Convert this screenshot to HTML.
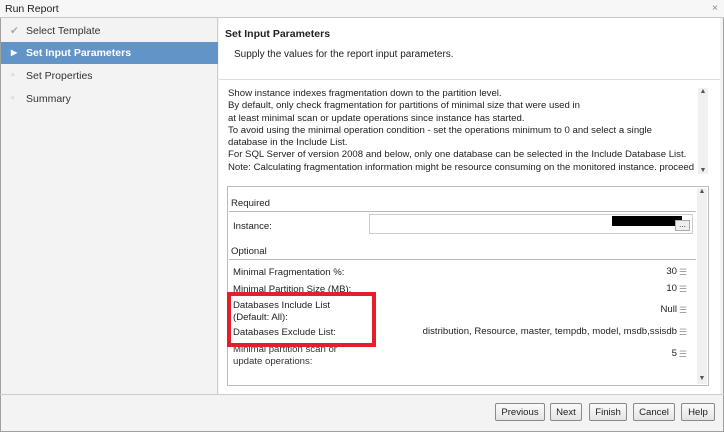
<!DOCTYPE html>
<html><head><style>
*{box-sizing:border-box;margin:0;padding:0}
body{width:724px;height:432px;background:#fff;font-family:"Liberation Sans",sans-serif;font-size:9.6px;color:#222;position:relative;overflow:hidden}
.abs{position:absolute}
.win{left:0;top:0;width:724px;height:432px;border:1px solid #a0a0a0;background:#f3f3f3}
.title{left:0;top:0;width:724px;height:18px;background:#f7f7f7;border-bottom:1px solid #c8c8c8;font-size:10.5px;padding:3px 5px}
.nav{left:1px;top:18px;width:217px;height:376px;background:#f3f3f3;border-right:1px solid #d0d0d0}
.item{position:absolute;left:0;width:217px;height:22px;font-size:10.5px;padding:5px 0 0 25px;color:#333}
.sel{background:#6394c8;color:#fff;font-weight:bold}
.right{left:219px;top:18px;width:501px;height:376px;background:#fff}
.rl{position:absolute;white-space:nowrap}
.btn{position:absolute;top:403px;height:18px;border:1px solid #8a8a8a;border-radius:2px;background:linear-gradient(#fafafa,#e4e4e4);font-size:9.6px;text-align:center;padding-top:3px;color:#222}
.ic{position:absolute;width:12px;height:10px;font-size:9px;color:#999;letter-spacing:-1px}
</style></head><body>
<div class="abs win"></div>
<div class="abs title">Run Report<span style="position:absolute;right:6px;top:2px;color:#888">×</span></div>
<div class="abs nav">
 <div class="item" style="top:2px"><span style="position:absolute;left:9px;color:#aaa">✔</span>Select Template</div>
 <div class="item sel" style="top:24px"><span style="position:absolute;left:10px;font-size:8px;top:6px">▶</span>Set Input Parameters</div>
 <div class="item" style="top:47px"><span style="position:absolute;left:10px;top:4px;color:#bbb">▫</span>Set Properties</div>
 <div class="item" style="top:70px"><span style="position:absolute;left:10px;top:4px;color:#bbb">▫</span>Summary</div>
</div>
<div class="abs right">
 <div class="rl" style="left:6px;top:10px;font-weight:bold;font-size:10.5px">Set Input Parameters</div>
 <div class="rl" style="left:15px;top:31px;font-size:10px">Supply the values for the report input parameters.</div>
 <div class="rl" style="left:0;top:61px;width:501px;border-top:1px solid #ddd"></div>
 <div class="rl" style="left:9px;top:70px;line-height:12.3px;color:#222;width:470px;height:86px;overflow:hidden">Show instance indexes fragmentation down to the partition level.<br>By default, only check fragmentation for partitions of minimal size that were used in<br>at least minimal scan or update operations since instance has started.<br>To avoid using the minimal operation condition - set the operations minimum to 0 and select a single<br>database in the Include List.<br>For SQL Server of version 2008 and below, only one database can be selected in the Include Database List.<br>Note: Calculating fragmentation information might be resource consuming on the monitored instance. proceed<br>with care.</div>
 <div class="rl" style="left:479px;top:70px;width:10px;height:86px;background:#f0f0f0;font-size:7px;color:#555;text-align:center">▲<div style="position:absolute;bottom:0;width:10px">▼</div></div>
 <div class="rl" style="left:8px;top:168px;width:482px;height:200px;border:1px solid #bbb"></div>
 <div class="rl" style="left:478px;top:170px;width:10px;height:196px;background:#f0f0f0;font-size:7px;color:#555;text-align:center">▲<div style="position:absolute;bottom:2px;width:10px">▼</div></div>
 <div class="rl" style="left:12px;top:180px">Required</div>
 <div class="rl" style="left:10px;top:193px;width:467px;border-top:1px solid #bbb"></div>
 <div class="rl" style="left:14px;top:203px">Instance:</div>
 <div class="rl" style="left:150px;top:196px;width:324px;height:20px;border:1px solid #ccc"></div>
 <div class="rl" style="left:393px;top:198px;width:70px;height:10px;background:#000"></div>
 <div class="rl" style="left:456px;top:202px;width:15px;height:11px;border:1px solid #aaa;background:#eee;font-size:8px;line-height:8px;text-align:center">...</div>
 <div class="rl" style="left:12px;top:228px">Optional</div>
 <div class="rl" style="left:10px;top:241px;width:467px;border-top:1px solid #bbb"></div>
 <div class="rl" style="left:14px;top:249px">Minimal Fragmentation %:</div>
 <div class="rl" style="right:43px;top:248px">30</div>
 <div class="rl" style="left:14px;top:266px">Minimal Partition Size (MB):</div>
 <div class="rl" style="right:43px;top:265px">10</div>
 <div class="rl" style="left:14px;top:282px;line-height:12px">Databases Include List<br>(Default: All):</div>
 <div class="rl" style="right:43px;top:286px">Null</div>
 <div class="rl" style="left:14px;top:309px">Databases Exclude List:</div>
 <div class="rl" style="right:43px;top:308px">distribution, Resource, master, tempdb, model, msdb,ssisdb</div>
 <div class="rl" style="left:14px;top:326px;line-height:12px;color:#333">Minimal partition scan or<br>update operations:</div>
 <div class="rl" style="right:43px;top:330px">5</div>
 <div class="ic" style="left:460px;top:249px">☰</div>
 <div class="ic" style="left:460px;top:266px">☰</div>
 <div class="ic" style="left:460px;top:287px">☰</div>
 <div class="ic" style="left:460px;top:309px">☰</div>
 <div class="ic" style="left:460px;top:331px">☰</div>
 <div class="rl" style="left:8px;top:274px;width:149px;height:55px;border:4px solid #e3202a"></div>
</div>
<div class="abs" style="left:0;top:394px;width:724px;border-top:1px solid #ccc"></div>
<div class="btn" style="left:495px;width:50px">Previous</div>
<div class="btn" style="left:550px;width:32px">Next</div>
<div class="btn" style="left:589px;width:38px">Finish</div>
<div class="btn" style="left:633px;width:42px">Cancel</div>
<div class="btn" style="left:681px;width:34px">Help</div>
</body></html>
